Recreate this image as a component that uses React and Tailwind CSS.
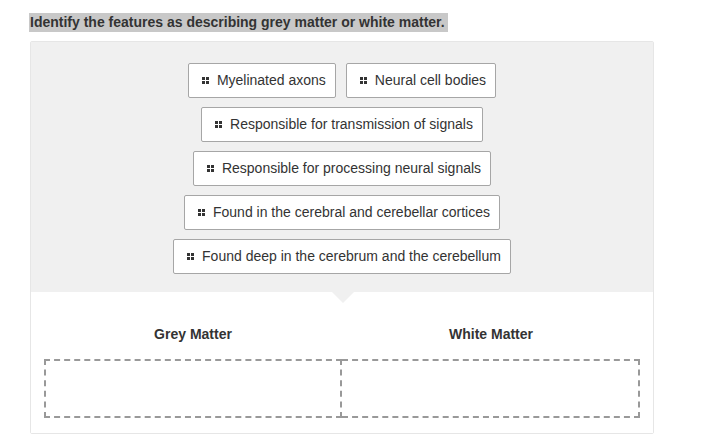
import React from 'react';

const rows = [
    ['Myelinated axons', 'Neural cell bodies'],
    ['Responsible for transmission of signals'],
    ['Responsible for processing neural signals'],
    ['Found in the cerebral and cerebellar cortices'],
    ['Found deep in the cerebrum and the cerebellum'],
];

const Grip = () => (
    <svg width="7" height="7" viewBox="0 0 7 7" className="shrink-0">
        <rect x="0" y="0" width="3" height="3" fill="#333" />
        <rect x="4" y="0" width="3" height="3" fill="#333" />
        <rect x="0" y="4" width="3" height="3" fill="#333" />
        <rect x="4" y="4" width="3" height="3" fill="#333" />
    </svg>
);

const Chip = ({ label }) => (
    <div className="h-[35px] flex items-center gap-[8px] pl-[13px] pr-[9px] bg-white border border-[#a6a6a6] rounded-[2px] text-[14px] text-[#333]">
        <Grip />
        <span>{label}</span>
    </div>
);

const App = () => {
    return (
        <div className="w-[715px] h-[438px] bg-white pt-[13px] pl-[29px]" style={{ fontFamily: '"Liberation Sans", Arial, sans-serif' }}>
            {/* QUESTION */}
            <div className="w-fit bg-[#c8c8c8] h-[19px] leading-[19px] text-[14px] font-bold text-[#333] pl-[1px] pr-[3px]">
                Identify the features as describing grey matter or white matter.
            </div>

            {/* PANEL */}
            <div className="mt-[9px] ml-[1px] w-[624px] border border-[#e6e6e6] rounded-[2px]">
                {/* Choices */}
                <div className="relative bg-[#f0f0f0] pt-[21px] pb-[18px] flex flex-col items-center gap-[9px]">
                    {rows.map((row, i) => (
                        <div key={i} className="flex gap-[10px]">
                            {row.map((label) => <Chip key={label} label={label} />)}
                        </div>
                    ))}
                    {/* Notch */}
                    <div className="absolute left-[301px] -bottom-[11px] w-0 h-0 border-l-[11px] border-r-[11px] border-t-[11px] border-l-transparent border-r-transparent border-t-[#f0f0f0]"></div>
                </div>

                {/* Targets */}
                <div className="bg-white px-[13px] pt-[34px] pb-[15px]">
                    <div className="grid grid-cols-2">
                        <div className="text-center text-[14px] font-bold text-[#333] h-[17px] leading-[17px]">Grey Matter</div>
                        <div className="text-center text-[14px] font-bold text-[#333] h-[17px] leading-[17px]">White Matter</div>
                    </div>
                    <div className="mt-[16px] grid grid-cols-2">
                        <div className="h-[59px] border-2 border-dashed border-[#999]"></div>
                        <div className="h-[59px] border-2 border-l-0 border-dashed border-[#999]"></div>
                    </div>
                </div>
            </div>
        </div>
    );
};

export default App;
